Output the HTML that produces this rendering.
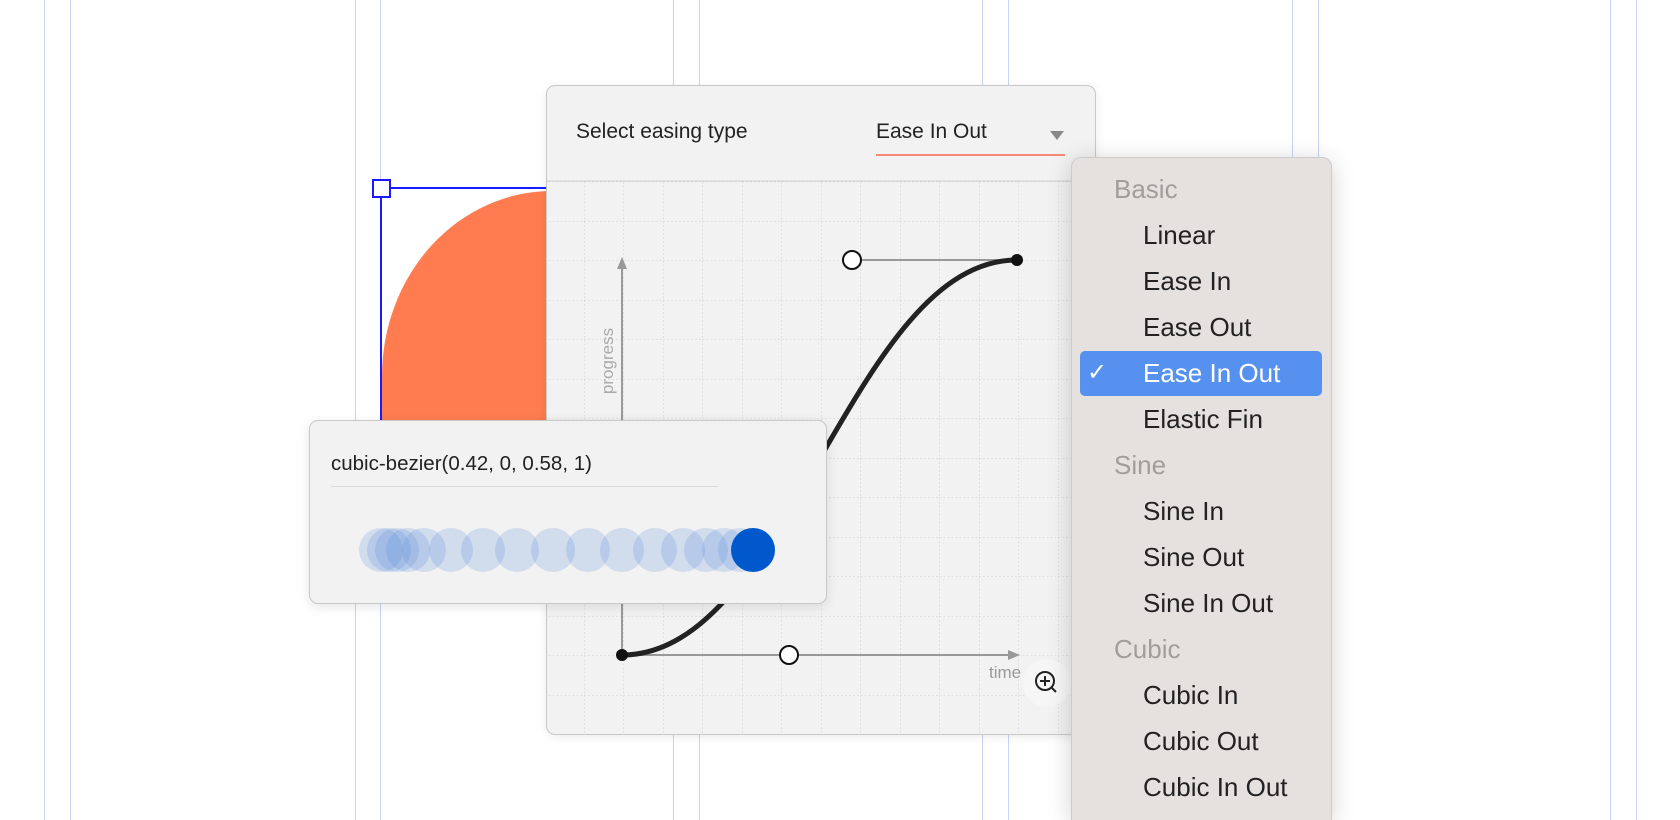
<!DOCTYPE html>
<html style="overflow:hidden;height:820px"><head><meta charset="utf-8"><style>
*{margin:0;padding:0;box-sizing:border-box}
body{width:1680px;height:820px;background:#fff;position:relative;overflow:hidden;font-family:"Liberation Sans",sans-serif}
.g{position:absolute;top:0;width:1px;height:820px;background:#c9d3f7}
.a{position:absolute}
.mi{position:absolute;left:1143px;font-size:26px;color:#222;line-height:30px}
.mh{position:absolute;left:1114px;font-size:26px;color:#a09d9b;line-height:30px}
</style></head><body>
<div class="g" style="left:44px"></div><div class="g" style="left:70px"></div>
<div class="g" style="left:355px"></div><div class="g" style="left:380px"></div>
<div class="g" style="left:673px"></div><div class="g" style="left:699px"></div>
<div class="g" style="left:982px"></div><div class="g" style="left:1008px"></div>
<div class="g" style="left:1292px"></div><div class="g" style="left:1318px"></div>
<div class="g" style="left:1610px"></div><div class="g" style="left:1636px"></div>

<div class="a" style="left:382px;top:191px;width:220px;height:300px;background:#fe7c50;border-top-left-radius:170px 185px"></div>
<div class="a" style="left:381px;top:187px;width:170px;height:2px;background:#1a1aff"></div>
<div class="a" style="left:380px;top:187px;width:2px;height:240px;background:#1a1aff"></div>
<div class="a" style="left:372px;top:179px;width:19px;height:19px;border:2px solid #1a1aff;background:#fff"></div>

<div class="a" style="left:546px;top:85px;width:550px;height:650px;background:#f2f2f2;border:1px solid #c8c8c8;border-radius:9px;overflow:hidden;box-shadow:0 2px 10px rgba(0,0,0,.08)">
<svg width="550" height="650" style="position:absolute;left:-1px;top:-1px">
<defs><pattern id="p" x="38" y="136" width="39.5" height="39.5" patternUnits="userSpaceOnUse"><path d="M0 0V39.5M0 0H39.5" stroke="#cfcfcf" stroke-width="1" stroke-dasharray="2 2" fill="none"/></pattern></defs>
<rect x="0" y="96" width="550" height="554" fill="url(#p)"/>
<line x1="0" y1="96" x2="550" y2="96" stroke="#d0d0d0"/>
<line x1="76" y1="570" x2="76" y2="180" stroke="#999" stroke-width="2"/>
<path d="M71 184L76 172L81 184Z" fill="#999"/>
<line x1="76" y1="570" x2="466" y2="570" stroke="#999" stroke-width="2"/>
<path d="M462 565L474 570L462 575Z" fill="#999"/>
<text transform="translate(67,276) rotate(-90)" font-size="17" fill="#aaa" text-anchor="middle" font-family="Liberation Sans">progress</text>
<text x="443" y="593" font-size="17" fill="#999" font-family="Liberation Sans">time</text>
<line x1="76" y1="570" x2="243" y2="570" stroke="#999" stroke-width="2"/>
<line x1="306" y1="175" x2="471" y2="175" stroke="#999" stroke-width="2"/>
<path d="M76 570C243 570 306 175 471 175" stroke="#222" stroke-width="5" fill="none"/>
<circle cx="76" cy="570" r="6" fill="#111"/><circle cx="471" cy="175" r="6" fill="#111"/>
<circle cx="243" cy="570" r="9" fill="#fff" stroke="#111" stroke-width="2"/>
<circle cx="306" cy="175" r="9" fill="#fff" stroke="#111" stroke-width="2"/>
<circle cx="501" cy="598" r="24" fill="#f6f6f6"/>
<circle cx="499" cy="596" r="9" fill="none" stroke="#222" stroke-width="2"/>
<path d="M494 596H504M499 591V601M505 602L510 607" stroke="#222" stroke-width="2"/>
</svg>
<div class="a" style="left:29px;top:34px;font-size:21px;color:#222">Select easing type</div>
<div class="a" style="left:329px;top:34px;font-size:21px;color:#222">Ease In Out</div>
<div class="a" style="left:329px;top:68px;width:189px;height:2px;background:#f48a76"></div>
<div class="a" style="left:503px;top:45px;border-left:7px solid transparent;border-right:7px solid transparent;border-top:9px solid #888"></div>
</div>

<div class="a" style="left:1071px;top:157px;width:261px;height:663px;background:#e4e1df;border:1px solid #ccc;border-bottom:none;border-radius:10px 10px 0 0;box-shadow:0 4px 24px rgba(0,0,0,.18)"></div>
<div class="a" style="left:1080px;top:351px;width:242px;height:45px;background:#5691ef;border-radius:5px"></div>
<div class="mh" style="top:174px">Basic</div>
<div class="mi" style="top:220px">Linear</div>
<div class="mi" style="top:266px">Ease In</div>
<div class="mi" style="top:312px">Ease Out</div>
<div class="mi" style="top:358px;color:#fff">Ease In Out</div>
<div class="a" style="left:1087px;top:358px;font-size:24px;color:#fff;line-height:30px">✓</div>
<div class="mi" style="top:404px">Elastic Fin</div>
<div class="mh" style="top:450px">Sine</div>
<div class="mi" style="top:496px">Sine In</div>
<div class="mi" style="top:542px">Sine Out</div>
<div class="mi" style="top:588px">Sine In Out</div>
<div class="mh" style="top:634px">Cubic</div>
<div class="mi" style="top:680px">Cubic In</div>
<div class="mi" style="top:726px">Cubic Out</div>
<div class="mi" style="top:772px">Cubic In Out</div>

<div class="a" style="left:309px;top:420px;width:518px;height:184px;background:#f2f2f2;border:1px solid #c8c8c8;border-radius:9px;box-shadow:0 3px 12px rgba(0,0,0,.1)">
<div class="a" style="left:21px;top:31px;font-size:20.5px;color:#222">cubic-bezier(0.42, 0, 0.58, 1)</div>
<div class="a" style="left:21px;top:65px;width:387px;height:1px;background:#dadada"></div>
<svg class="a" style="left:0;top:0" width="518" height="184">
<g fill="#5b8fdc" fill-opacity=".22">
<ellipse cx="71" cy="129" rx="22" ry="22"/><ellipse cx="79" cy="129" rx="22" ry="22"/><ellipse cx="87" cy="129" rx="22" ry="22"/><ellipse cx="98" cy="129" rx="22" ry="22"/><ellipse cx="114" cy="129" rx="22" ry="22"/><ellipse cx="141" cy="129" rx="22" ry="22"/><ellipse cx="173" cy="129" rx="22" ry="22"/><ellipse cx="207" cy="129" rx="22" ry="22"/><ellipse cx="243" cy="129" rx="22" ry="22"/><ellipse cx="278" cy="129" rx="22" ry="22"/><ellipse cx="312" cy="129" rx="22" ry="22"/><ellipse cx="345" cy="129" rx="22" ry="22"/><ellipse cx="373" cy="129" rx="22" ry="22"/><ellipse cx="396" cy="129" rx="22" ry="22"/><ellipse cx="414" cy="129" rx="22" ry="22"/><ellipse cx="430" cy="129" rx="22" ry="22"/>
</g>
<ellipse cx="443" cy="129" rx="22" ry="22" fill="#0059cc"/>
</svg>
</div>
</body></html>
